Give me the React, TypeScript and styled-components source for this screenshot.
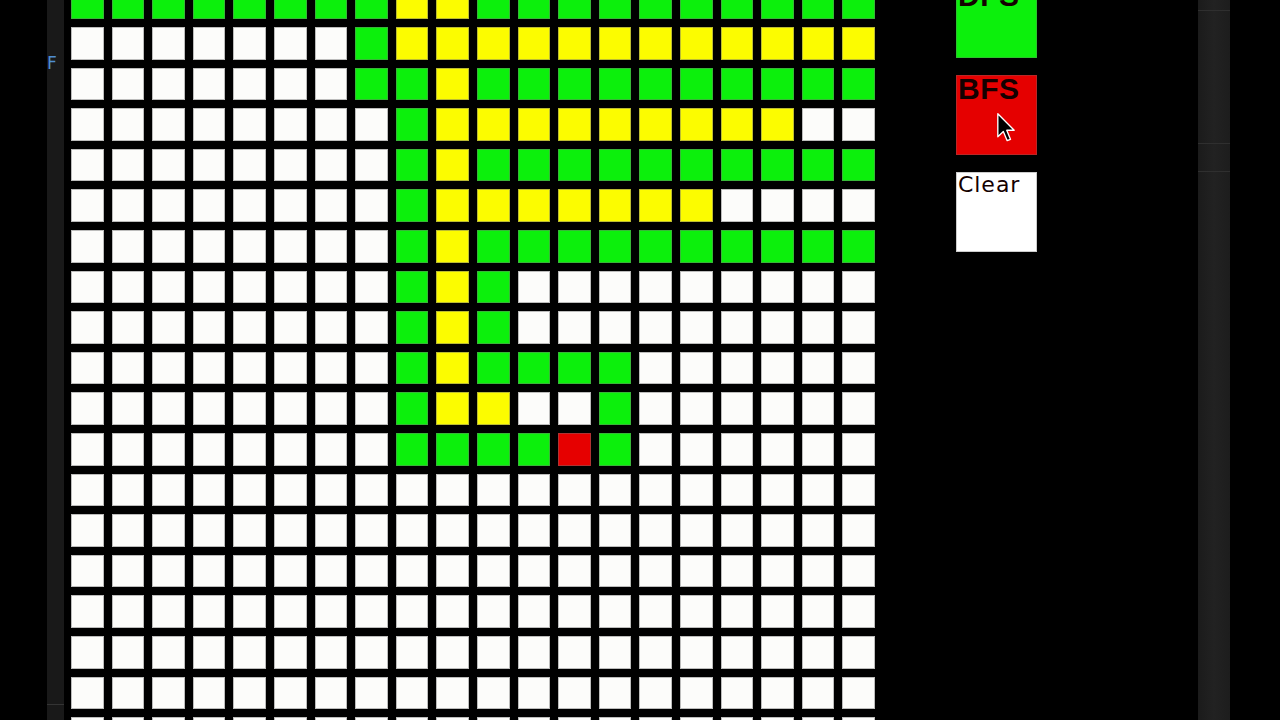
import React from "react";
import styled, { createGlobalStyle } from "styled-components";

const Global = createGlobalStyle`
  html, body { margin: 0; padding: 0; background: #000; overflow: hidden; }
  body { width: 1280px; height: 720px; font-family: "Liberation Sans", Arial, sans-serif; }
`;

const Page = styled.div`
  position: relative;
  display: flex;
  align-items: flex-start;
  width: 1280px;
  height: 720px;
  padding-left: 47px;
  box-sizing: border-box;
  overflow: hidden;
  background: #000;
`;

const LeftStrip = styled.div`
  width: 17px;
  height: 720px;
  flex: none;
  display: flex;
  flex-direction: column;
  background: #191919;
  &::after {
    content: "";
    margin-top: auto;
    margin-bottom: 15px;
    height: 1px;
    background: #343434;
  }
`;

const StripLabel = styled.span`
  margin-top: 54px;
  padding-left: 0;
  font-family: "DejaVu Sans", sans-serif;
  font-size: 17px;
  line-height: 18px;
  color: #4f8ed0;
`;

const Grid = styled.div`
  flex: none;
  margin-left: 7px;
  margin-top: -13.6px;
  display: grid;
  grid-template-columns: repeat(20, 32.6px);
  grid-auto-rows: 32.6px;
  gap: 8px;
`;

const colors: Record<string, string> = {
  W: "#fcfcfa",
  G: "#0cf00c",
  Y: "#fcfc00",
  R: "#e60000",
};

const Cell = styled.div<{ $c: string }>`
  background: ${(p) => colors[p.$c]};
  box-shadow: inset 0 0 0 1px rgba(110, 110, 110, 0.45);
`;

const Buttons = styled.div`
  flex: none;
  margin-left: 81px;
  margin-top: -22px;
  display: flex;
  flex-direction: column;
  gap: 17px;
`;

const Button = styled.div<{ $bg: string }>`
  width: 81px;
  height: 80px;
  box-sizing: border-box;
  padding: 2px 0 0 2px;
  background: ${(p) => p.$bg};
  box-shadow: inset 0 0 0 1px rgba(110, 110, 110, 0.35);
`;

const Label = styled.div<{ $size: number; $spacing: number; $weight: number; $font: string; $shift: number }>`
  color: #140000;
  font-family: ${(p) => p.$font};
  font-size: ${(p) => p.$size}px;
  font-weight: ${(p) => p.$weight};
  letter-spacing: ${(p) => p.$spacing}px;
  line-height: 1;
  margin-top: ${(p) => p.$shift}px;
`;

const RightStrip = styled.div`
  flex: none;
  margin-left: 161px;
  width: 32px;
  height: 720px;
  display: flex;
  flex-direction: column;
  background: linear-gradient(90deg, #1b1b1b, #222 50%, #1d1d1d);
`;

const StripLine = styled.div<{ $top: number }>`
  margin-top: ${(p) => p.$top}px;
  height: 1px;
  background: #2f2f2f;
`;

const Cursor = styled.svg`
  position: absolute;
  left: 997px;
  top: 113px;
`;

const rows = [
  "GGGGGGGGYYGGGGGGGGGG",
  "WWWWWWWGYYYYYYYYYYYY",
  "WWWWWWWGGYGGGGGGGGGG",
  "WWWWWWWWGYYYYYYYYYWW",
  "WWWWWWWWGYGGGGGGGGGG",
  "WWWWWWWWGYYYYYYYWWWW",
  "WWWWWWWWGYGGGGGGGGGG",
  "WWWWWWWWGYGWWWWWWWWW",
  "WWWWWWWWGYGWWWWWWWWW",
  "WWWWWWWWGYGGGGWWWWWW",
  "WWWWWWWWGYYWWGWWWWWW",
  "WWWWWWWWGGGGRGWWWWWW",
  ...Array.from({ length: 8 }, () => "WWWWWWWWWWWWWWWWWWWW"),
];

const sans = `"Liberation Sans", Arial, sans-serif`;
const dejavu = `"DejaVu Sans", sans-serif`;

export default function App() {
  return (
    <>
      <Global />
      <Page>
        <LeftStrip>
          <StripLabel>F</StripLabel>
        </LeftStrip>
        <Grid>
          {rows.flatMap((r, ri) =>
            r.split("").map((c, ci) => <Cell key={`${ri}-${ci}`} $c={c} />)
          )}
        </Grid>
        <Buttons>
          <Button $bg="#0cf00c">
            <Label $size={30} $spacing={0.6} $weight={700} $font={sans} $shift={1}>DFS</Label>
          </Button>
          <Button $bg="#e50000">
            <Label $size={30} $spacing={0.6} $weight={700} $font={sans} $shift={-3}>BFS</Label>
          </Button>
          <Button $bg="#ffffff">
            <Label $size={22} $spacing={1} $weight={400} $font={dejavu} $shift={0}>Clear</Label>
          </Button>
        </Buttons>
        <RightStrip>
          <StripLine $top={10} />
          <StripLine $top={132} />
          <StripLine $top={27} />
        </RightStrip>
        <Cursor width="18" height="29" viewBox="0 0 12 19.5">
          <path
            d="M0.5 0.5 L0.5 16 L4.2 12.4 L6.8 18.6 L9 17.7 L6.5 11.6 L11.5 11.6 Z"
            fill="#000"
            stroke="#fff"
            strokeWidth="0.9"
            strokeLinejoin="round"
          />
        </Cursor>
      </Page>
    </>
  );
}
